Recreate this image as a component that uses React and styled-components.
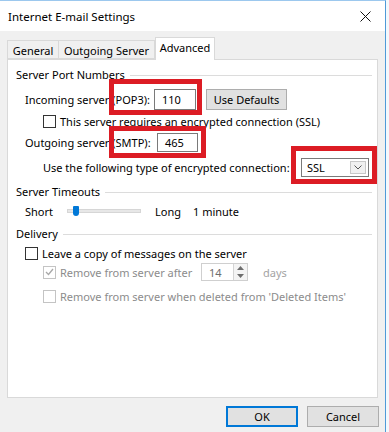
import React from "react";
import styled, { createGlobalStyle } from "styled-components";

const Global = createGlobalStyle`
  html, body { margin: 0; padding: 0; background: #f4f8fc; overflow: hidden; }
  body { font-family: "Noto Sans", "Segoe UI", sans-serif; font-size: 11px; color: #000; }
`;

const Window = styled.div`
  position: relative;
  width: 386px;
  height: 432px;
  background: #f0f0f0;
  border-right: 1px solid #4f9ad8;
  border-top: 1px solid #9cc8ee;
  box-sizing: border-box;
  display: flex;
  flex-direction: column;
`;

const TitleBar = styled.div`
  height: 30px;
  background: #fff;
  display: flex;
  align-items: center;
  justify-content: space-between;
  padding: 0 14px 0 8px;
  font-size: 11.5px;
`;

const Body = styled.div`
  padding: 6px 6px 0 7px;
  display: flex;
  flex-direction: column;
  flex: 1;
`;

const TabStrip = styled.div`
  display: flex;
  align-items: flex-end;
  height: 22px;
  position: relative;
  z-index: 1;
`;

const Tab = styled.div`
  width: ${(p) => p.$w}px;
  height: ${(p) => (p.$active ? "23px" : "19px")};
  box-sizing: border-box;
  background: ${(p) => (p.$active ? "#fff" : "#f0f0f0")};
  border: 1px solid #d9d9d9;
  border-bottom: ${(p) => (p.$active ? "none" : "1px solid #d9d9d9")};
  border-left: ${(p) => (p.$first || p.$active ? "1px solid #d9d9d9" : "none")};
  margin-bottom: ${(p) => (p.$active ? "-1px" : "0")};
  display: flex;
  align-items: center;
  justify-content: center;
  padding-top: ${(p) => (p.$active ? "0" : "1px")};
  padding-bottom: ${(p) => (p.$active ? "4px" : "0")};
`;

const Panel = styled.div`
  position: relative;
  width: 371px;
  height: 339px;
  box-sizing: border-box;
  background: #fff;
  border: 1px solid #d9d9d9;
  display: flex;
  flex-direction: column;
`;

const GroupHeader = styled.div`
  height: ${(p) => p.$h}px;
  display: flex;
  align-items: center;
  padding: 0 5px 0 8px;
  gap: 5px;
  &::after {
    content: "";
    flex: 1;
    height: 1px;
    background: #dcdcdc;
    margin-top: 2px;
  }
`;

const Row = styled.div`
  height: ${(p) => p.$h}px;
  display: flex;
  align-items: center;
  padding-left: ${(p) => p.$indent}px;
  color: ${(p) => (p.$disabled ? "#8c8c8c" : "#000")};
`;

const FixedLabel = styled.span`
  width: ${(p) => p.$w}px;
  flex: none;
  white-space: nowrap;
`;

const TextBox = styled.div`
  width: ${(p) => p.$w}px;
  height: ${(p) => p.$h}px;
  box-sizing: border-box;
  border: 1px solid #7a7a7a;
  background: #fff;
  display: flex;
  align-items: center;
  padding-left: 7px;
  flex: none;
`;

const Button = styled.div`
  width: ${(p) => p.$w}px;
  height: ${(p) => p.$h}px;
  box-sizing: border-box;
  background: #e1e1e1;
  border: ${(p) => (p.$default ? "2px solid #0078d7" : "1px solid #adadad")};
  display: flex;
  align-items: center;
  justify-content: center;
  margin-left: ${(p) => p.$ml || 0}px;
  flex: none;
`;

const CheckBox = styled.div`
  width: 13px;
  height: 13px;
  box-sizing: border-box;
  border: 1px solid ${(p) => (p.$disabled ? "#c4c4c4" : "#333")};
  background: #fff;
  margin-right: 4px;
  flex: none;
  display: flex;
  align-items: center;
  justify-content: center;
`;

const Select = styled.div`
  width: 68px;
  height: 19px;
  box-sizing: border-box;
  border: 1px solid #7a7a7a;
  background: #fff;
  display: flex;
  align-items: center;
  justify-content: space-between;
  padding: 0 2px 0 5px;
  flex: none;
`;

const DropBtn = styled.div`
  width: 16px;
  height: 13px;
  box-sizing: border-box;
  border: 1px solid #c8c8c8;
  background: #f0f0f0;
  display: flex;
  align-items: center;
  justify-content: center;
`;

const Slider = styled.div`
  position: relative;
  width: 74px;
  height: 4px;
  background: #e7e7e7;
  border: 1px solid #d6d6d6;
  box-sizing: border-box;
  margin: 0 14px 0 0;
  flex: none;
`;

const Thumb = styled.div`
  position: absolute;
  left: 5px;
  top: -4px;
  width: 6px;
  height: 10px;
  background: #0078d7;
  border-radius: 1px 1px 3px 3px;
`;

const Spinner = styled.div`
  width: 47px;
  height: 18px;
  box-sizing: border-box;
  border: 1px solid #cfcfcf;
  background: #fff;
  display: flex;
  align-items: center;
  justify-content: space-between;
  padding-left: 7px;
  color: #6d6d6d;
  margin-right: 15px;
  flex: none;
`;

const SpinBtns = styled.div`
  width: 13px;
  height: 16px;
  border-left: 1px solid #d4d4d4;
  display: flex;
  flex-direction: column;
  align-items: center;
  justify-content: space-around;
  background: #f4f4f4;
`;

const Light = styled.span`
  color: #a3a3a3;
`;

const Footer = styled.div`
  display: flex;
  justify-content: flex-end;
  gap: 9px;
  padding: 8px 0 0 0;
`;

const Highlight = styled.div`
  position: absolute;
  left: ${(p) => p.$x}px;
  top: ${(p) => p.$y}px;
  width: ${(p) => p.$w}px;
  height: ${(p) => p.$h}px;
  box-sizing: border-box;
  border: 5px solid #dc1c24;
  pointer-events: none;
`;

const Filler = styled.div`
  flex: 1;
`;

const Check = () => (
  <svg width="9" height="8" viewBox="0 0 9 8">
    <path d="M1 4 L3.5 6.5 L8 1" fill="none" stroke="#a8a8a8" strokeWidth="1.3" />
  </svg>
);

export default function App() {
  return (
    <>
      <Global />
      <Window>
        <TitleBar>
          <span>Internet E-mail Settings</span>
          <svg width="11" height="11" viewBox="0 0 11 11">
            <path d="M0.5 0.5 L10.5 10.5 M10.5 0.5 L0.5 10.5" stroke="#111" strokeWidth="1" />
          </svg>
        </TitleBar>
        <Body>
          <TabStrip>
            <Tab $first $w={52}>General</Tab>
            <Tab $w={96}>Outgoing Server</Tab>
            <Tab $active $w={60}>Advanced</Tab>
          </TabStrip>
          <Panel>
            <GroupHeader $h={28}>Server Port Numbers</GroupHeader>
            <Row $h={22} $indent={17}>
              <FixedLabel $w={129}>Incoming server (POP3):</FixedLabel>
              <TextBox $w={42} $h={21}>110</TextBox>
              <Button $w={81} $h={21} $ml={10}>Use Defaults</Button>
            </Row>
            <Row $h={22} $indent={35}>
              <CheckBox />
              <span>This server requires an encrypted connection (SSL)</span>
            </Row>
            <Row $h={20} $indent={17}>
              <FixedLabel $w={132}>Outgoing server (SMTP):</FixedLabel>
              <TextBox $w={41} $h={19}>465</TextBox>
            </Row>
            <Row $h={30} $indent={35}>
              <FixedLabel $w={258}>Use the following type of encrypted connection:</FixedLabel>
              <Select>
                <span>SSL</span>
                <DropBtn>
                  <svg width="8" height="5" viewBox="0 0 8 5">
                    <path d="M0.5 0.5 L4 4 L7.5 0.5" fill="none" stroke="#555" strokeWidth="1" />
                  </svg>
                </DropBtn>
              </Select>
            </Row>
            <GroupHeader $h={18}>Server Timeouts</GroupHeader>
            <Row $h={22} $indent={17}>
              <FixedLabel $w={42}>Short</FixedLabel>
              <Slider>
                <Thumb />
              </Slider>
              <FixedLabel $w={38}>Long</FixedLabel>
              <span>1 minute</span>
            </Row>
            <GroupHeader $h={22}>Delivery</GroupHeader>
            <Row $h={18} $indent={17}>
              <CheckBox />
              <span>Leave a copy of messages on the server</span>
            </Row>
            <Row $h={20} $indent={35} $disabled>
              <CheckBox $disabled>
                <Check />
              </CheckBox>
              <FixedLabel $w={141}>Remove from server after</FixedLabel>
              <Spinner>
                <span>14</span>
                <SpinBtns>
                  <svg width="7" height="4" viewBox="0 0 7 4">
                    <path d="M0 4 L3.5 0 L7 4 Z" fill="#6d6d6d" />
                  </svg>
                  <svg width="7" height="4" viewBox="0 0 7 4">
                    <path d="M0 0 L3.5 4 L7 0 Z" fill="#6d6d6d" />
                  </svg>
                </SpinBtns>
              </Spinner>
              <Light>days</Light>
            </Row>
            <Row $h={28} $indent={35} $disabled>
              <CheckBox $disabled />
              <span>Remove from server when deleted from 'Deleted Items'</span>
            </Row>
            <Filler />
            <Highlight $x={101} $y={19} $w={93} $h={36} />
            <Highlight $x={101} $y={66} $w={97} $h={32} />
            <Highlight $x={283} $y={86} $w={86} $h={38} />
          </Panel>
          <Footer>
            <Button $w={72} $h={21} $default>OK</Button>
            <Button $w={72} $h={21}>Cancel</Button>
          </Footer>
        </Body>
      </Window>
    </>
  );
}
